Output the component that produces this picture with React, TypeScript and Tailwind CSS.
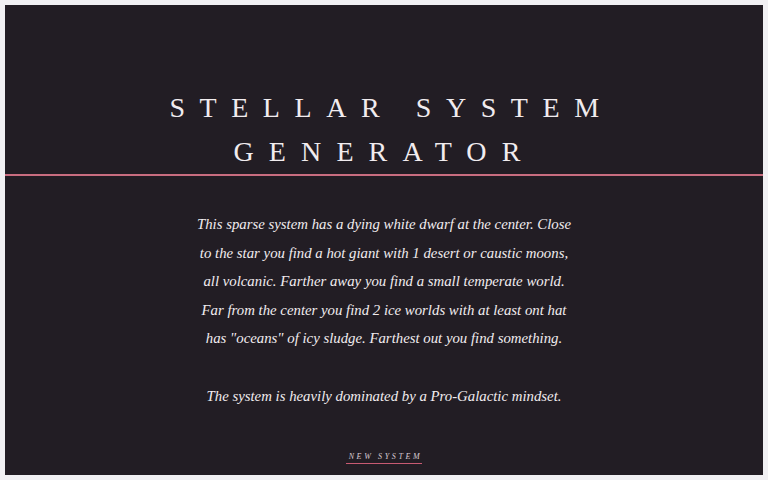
export default function App() {
  return (
    <div className="h-screen w-full bg-[#f1f0f3] p-[5px]">
      <div className="flex h-full flex-col bg-[#221d24] text-[#f1ecef]" style={{ fontFamily: '"Liberation Serif", serif' }}>
        <header className="border-b-2 border-[#c96d80] pt-[81px]">
          <h1 className="text-center text-[28px] leading-[44px] tracking-[0.52em]">
            <span className="block pl-[15px]">STELLAR SYSTEM</span>
            <span className="block pl-[1px] tracking-[0.54em]">GENERATOR</span>
          </h1>
        </header>

        <main className="mt-[34px] flex flex-col items-center text-center text-[14.8px] italic leading-[28.5px]">
          <p>
            This sparse system has a dying white dwarf at the center. Close
            <br />
            to the star you find a hot giant with 1 desert or caustic moons,
            <br />
            all volcanic. Farther away you find a small temperate world.
            <br />
            Far from the center you find 2 ice worlds with at least ont hat
            <br />
            has "oceans" of icy sludge. Farthest out you find something.
          </p>
          <p className="mt-[29px]">The system is heavily dominated by a Pro-Galactic mindset.</p>

          <button className="mt-[42px] border-b border-[#c85a72] pb-[1px] pl-[3px] text-[8px] uppercase italic leading-[10px] tracking-[0.33em] text-[#d9ccd4]">
            New System
          </button>
        </main>
      </div>
    </div>
  );
}
